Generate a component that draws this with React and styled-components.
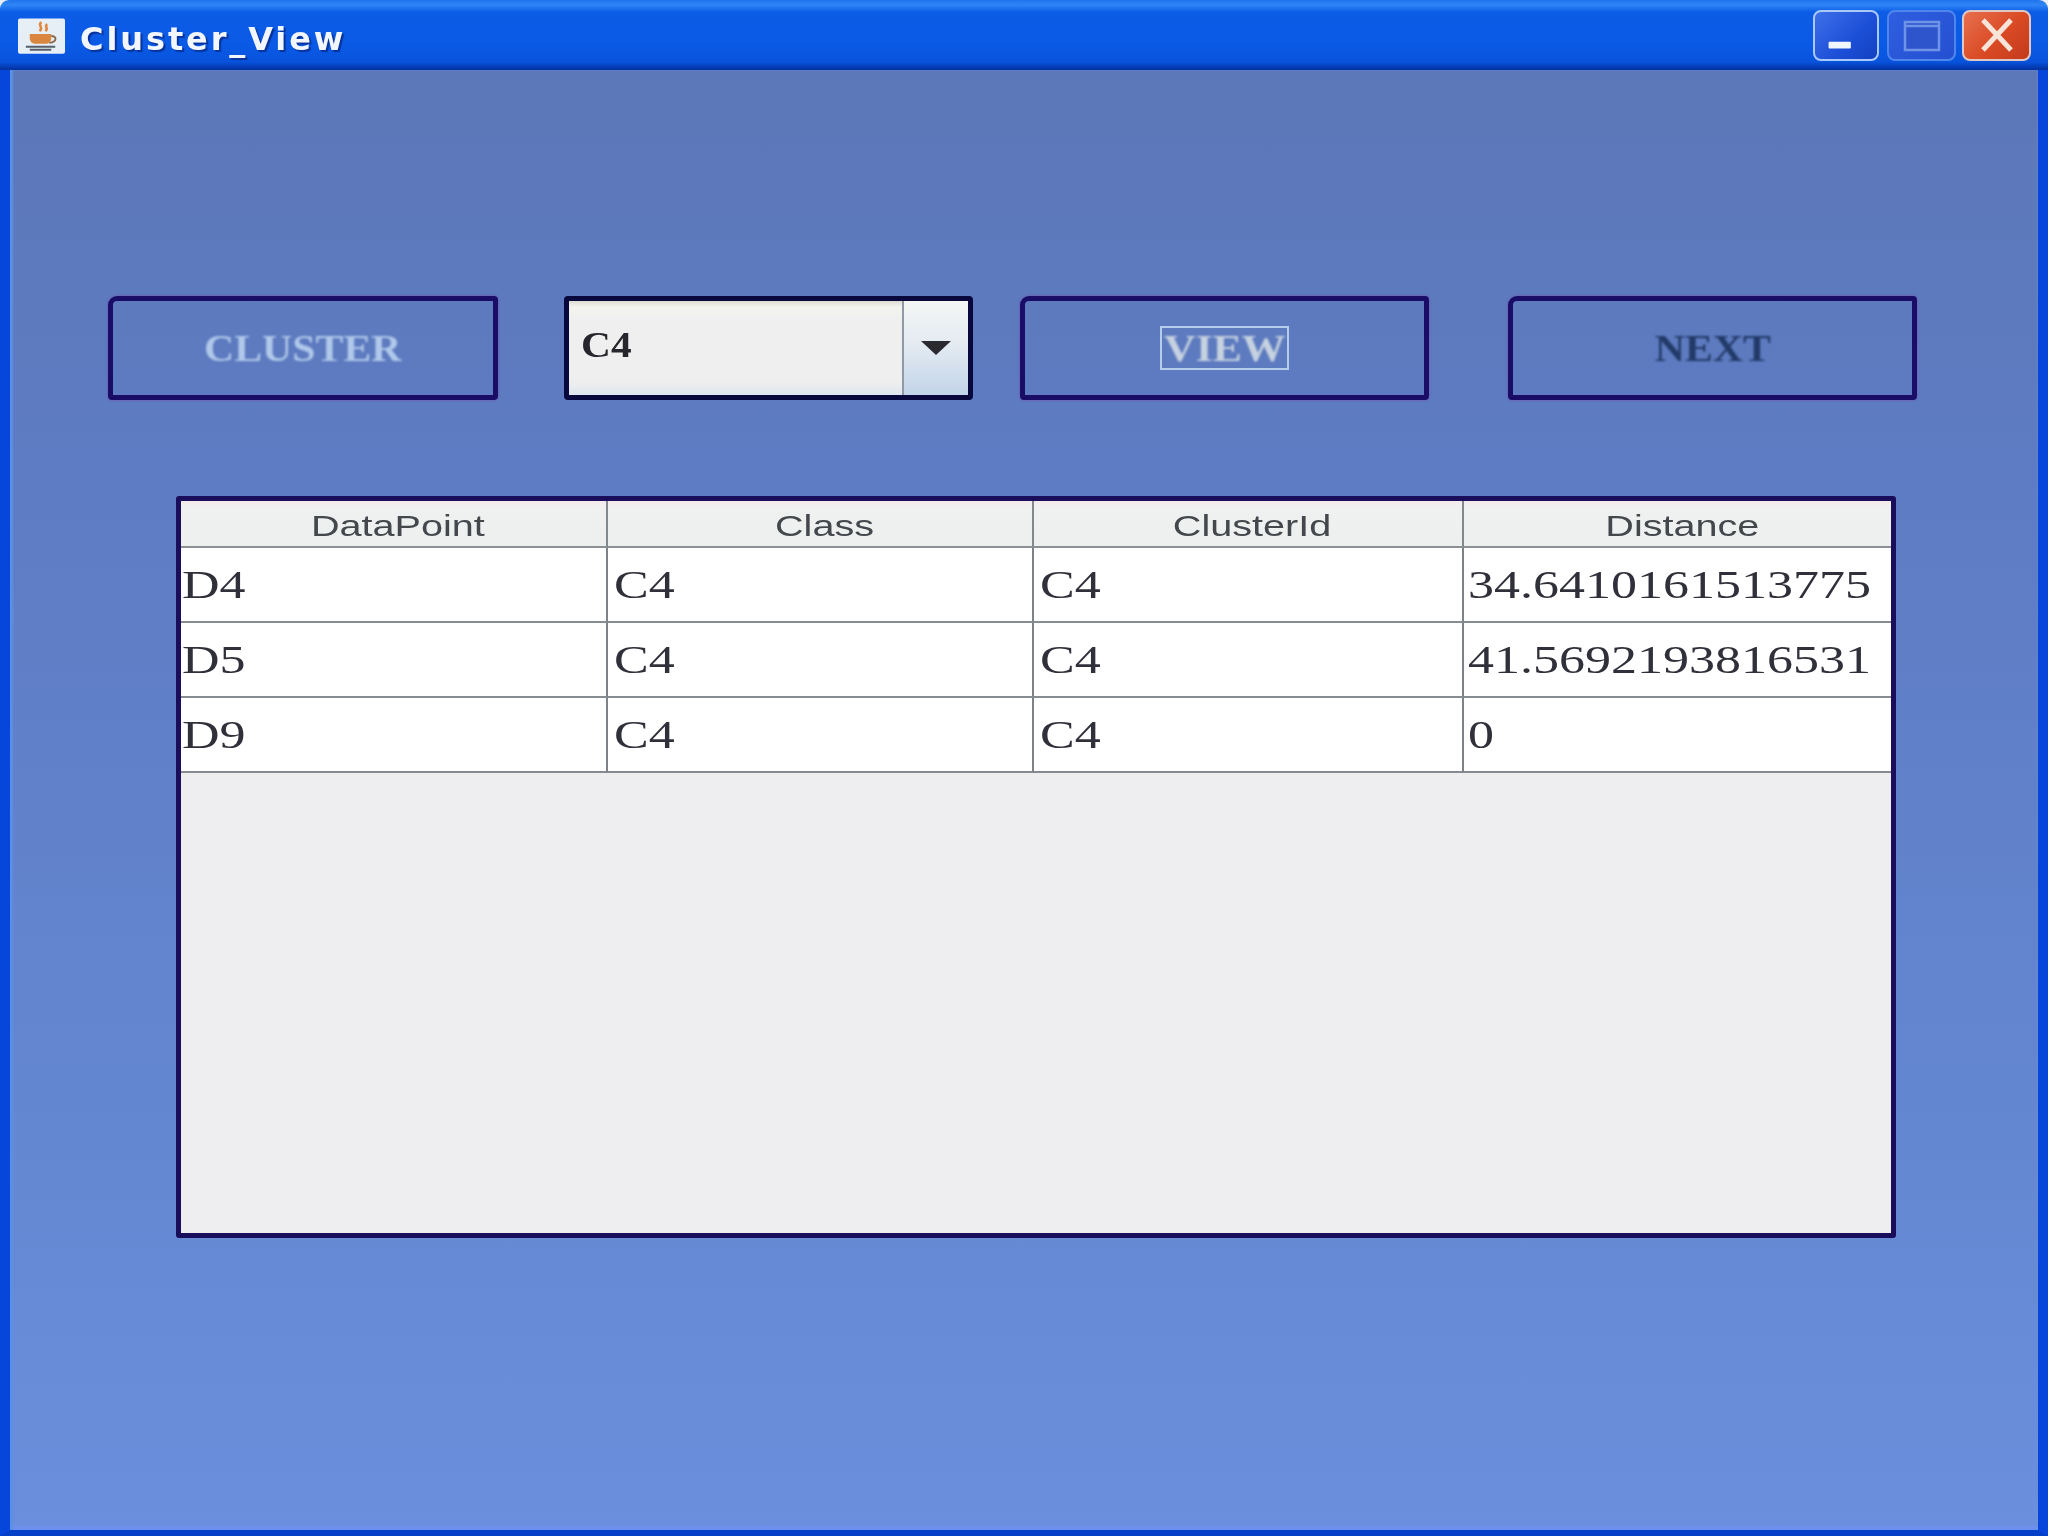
import React from "react";
import styled, { createGlobalStyle } from "styled-components";

const GlobalStyle = createGlobalStyle`
  html, body {
    margin: 0;
    padding: 0;
    background: #0a4fd8;
  }
`;

const Frame = styled.div`
  width: 2048px;
  height: 1536px;
  display: flex;
  flex-direction: column;
  overflow: hidden;
  background: linear-gradient(180deg, #e8eef8 0, #e8eef8 10px, #0a4bd6 10px);
`;

const TitleBar = styled.div`
  height: 70px;
  flex: none;
  display: flex;
  align-items: center;
  padding: 0 17px 0 18px;
  background: linear-gradient(180deg, #1f74ee 0, #2f86f6 5px, #0c5ce6 12px, #0a5ae6 45px, #0853dc 62px, #0438ac 68px, #04309c 70px);
  border-radius: 9px 9px 0 0;
`;

const AppIcon = styled.svg`
  width: 47px;
  height: 36px;
  flex: none;
  margin-top: 2px;
  filter: blur(0.6px);
`;

const Title = styled.div`
  margin: 7px 0 0 15px;
  flex: 1;
  font: bold 32px "DejaVu Sans", sans-serif;
  letter-spacing: 2.9px;
  color: #f2f7ff;
  text-shadow: 2px 2px 1px #07339a;
  filter: blur(0.7px);
`;

const WinButton = styled.div`
  width: ${(p) => p.$w}px;
  height: 51px;
  margin-left: ${(p) => p.$gap || 0}px;
  box-sizing: border-box;
  border: 2px solid ${(p) => p.$edge};
  border-radius: 8px;
  background: ${(p) => p.$bg};
  display: flex;
  align-items: center;
  justify-content: center;
  filter: blur(0.6px);
`;

const GlyphSvg = styled.svg`
  width: 64px;
  height: 46px;
`;

const Body = styled.div`
  flex: 1;
  display: flex;
  flex-direction: column;
  border-left: 10px solid #0646da;
  border-right: 10px solid #0646da;
  border-bottom: 6px solid #0540c8;
  padding-top: 226px;
  background: linear-gradient(180deg, #5c78b8 0%, #5e7cc4 30%, #6385cf 65%, #6b8fdc 100%);
  box-shadow: inset 3px 0 2px #5c90e6, inset 0 -4px 2px #6f90ee;
`;

const Toolbar = styled.div`
  display: flex;
  height: 104px;
  padding-left: 98px;
`;

const ActionButton = styled.button`
  width: ${(p) => p.$w}px;
  height: 104px;
  margin-right: ${(p) => p.$after || 0}px;
  box-sizing: border-box;
  padding: 0;
  border: 5px solid #1a0d68;
  border-radius: 9px 4px 4px 4px;
  background: transparent;
  box-shadow: 0 0 2px 1px rgba(120, 80, 170, 0.45);
  display: flex;
  align-items: center;
  justify-content: center;
`;

const ButtonText = styled.span`
  display: inline-block;
  font: bold 38px/40px "Liberation Serif", serif;
  color: ${(p) => p.$color};
  transform: scaleX(${(p) => p.$stretch || 1.1});
  filter: blur(0.8px);
`;

const FocusBox = styled.span`
  display: inline-flex;
  padding: 0 10px;
  outline: 2px solid #b4cdea;
`;

const Combo = styled.div`
  width: 409px;
  height: 104px;
  margin-right: 47px;
  box-sizing: border-box;
  border: 5px solid #08083c;
  border-radius: 4px;
  display: flex;
  background: #efefef;
`;

const ComboValue = styled.div`
  flex: 1;
  display: flex;
  align-items: center;
  padding: 0 0 6px 12px;
  border-right: 2px solid #8f9aa6;
  background: linear-gradient(180deg, #dcdcd4 0, #f4f4ee 6px, #efefef 20%, #efefef 85%, #dfe6ee 100%);
`;

const ComboText = styled.span`
  display: inline-block;
  font: bold 36px "Liberation Serif", serif;
  color: #26262c;
  transform: scaleX(1.15);
  transform-origin: left center;
  filter: blur(0.6px);
`;

const ComboArrow = styled.div`
  width: 64px;
  display: flex;
  align-items: center;
  justify-content: center;
  background: linear-gradient(180deg, #f4f6f4 0%, #e4ebf2 45%, #c2d4e8 100%);
`;

const ArrowSvg = styled.svg`
  width: 32px;
  height: 16px;
`;

const TablePanel = styled.div`
  width: 1720px;
  height: 742px;
  margin: 96px 0 0 166px;
  box-sizing: border-box;
  border: 5px solid #1a0d5c;
  border-radius: 3px;
  background: #eeedef;
  display: flex;
  flex-direction: column;
`;

const HeaderRow = styled.div`
  height: 47px;
  flex: none;
  display: grid;
  grid-template-columns: 427px 426px 430px 1fr;
  background: linear-gradient(180deg, #f6e9ec 0, #eff0f0 6px, #eef0f0 100%);
`;

const HeaderCell = styled.div`
  box-sizing: border-box;
  border-right: ${(p) => (p.$last ? "none" : "2px solid #82898e")};
  border-bottom: 2px solid #8b9195;
  display: flex;
  align-items: center;
  justify-content: center;
  padding: 4px 0 0 9px;
`;

const HeaderText = styled.span`
  display: inline-block;
  font: 30px "Liberation Sans", sans-serif;
  color: #44484c;
  transform: scaleX(1.32);
  filter: blur(0.6px);
`;

const DataRow = styled.div`
  height: 75px;
  flex: none;
  display: grid;
  grid-template-columns: 427px 426px 430px 1fr;
  background: #fff;
`;

const DataCell = styled.div`
  box-sizing: border-box;
  border-right: ${(p) => (p.$last ? "none" : "2px solid #7c8286")};
  border-bottom: 2px solid #868c90;
  display: flex;
  align-items: center;
  padding-left: ${(p) => p.$pad}px;
`;

const CellText = styled.span`
  display: inline-block;
  font: 40px "Liberation Serif", serif;
  color: #30303a;
  white-space: nowrap;
  transform: scaleX(1.3);
  transform-origin: left center;
  filter: blur(0.6px);
`;

const rows = [
  ["D4", "C4", "C4", "34.6410161513775"],
  ["D5", "C4", "C4", "41.5692193816531"],
  ["D9", "C4", "C4", "0"],
];

const columns = ["DataPoint", "Class", "ClusterId", "Distance"];
const cellPads = [1, 6, 6, 4];

const App = () => {
  return (
    <Frame>
      <GlobalStyle />
      <TitleBar>
        <AppIcon viewBox="0 0 48 36">
          <rect width="48" height="36" rx="2" fill="#e6eef6" />
          <path d="M24 4c-5 3 3 5-2 9M30 6c-4 2 2 4-2 7" stroke="#e2863a" strokeWidth="2.5" fill="none" />
          <path d="M12 16h22v4c0 4-3 6-6 6h-10c-3 0-6-2-6-6z" fill="#d9873e" />
          <path d="M34 18c6 0 6 6-2 7" stroke="#8a6a4a" strokeWidth="2" fill="none" />
          <path d="M8 29h30M12 32h22" stroke="#56606c" strokeWidth="2" />
        </AppIcon>
        <Title>Cluster_View</Title>
        <WinButton $w={66} $edge="#a9c9f8" $bg="linear-gradient(135deg, #3f6fe8, #1c4fd8 60%, #1340c0)">
          <GlyphSvg viewBox="0 0 64 46">
            <rect x="14" y="30" width="23" height="7" rx="1" fill="#f2f6ff" />
          </GlyphSvg>
        </WinButton>
        <WinButton $w={69} $gap={8} $edge="#4f86ee" $bg="linear-gradient(135deg, #2f5ee0, #2450d0)">
          <GlyphSvg viewBox="0 0 64 46">
            <path d="M15 10h34v28h-34zM15 14h34" stroke="#6f93e8" strokeWidth="2.5" fill="#2f55cc" />
          </GlyphSvg>
        </WinButton>
        <WinButton $w={69} $gap={6} $edge="#e0c8c4" $bg="linear-gradient(135deg, #e8704e, #d94a24 55%, #c23a1c)">
          <GlyphSvg viewBox="0 0 64 46">
            <path d="M18 8l28 30M46 8l-28 30" stroke="#f8e4d8" strokeWidth="5" />
          </GlyphSvg>
        </WinButton>
      </TitleBar>
      <Body>
        <Toolbar>
          <ActionButton $w={390} $after={66}>
            <ButtonText $color="#b0c8ea">CLUSTER</ButtonText>
          </ActionButton>
          <Combo>
            <ComboValue>
              <ComboText>C4</ComboText>
            </ComboValue>
            <ComboArrow>
              <ArrowSvg viewBox="0 0 32 16">
                <path d="M1 1h30l-15 14z" fill="#2a2a30" />
              </ArrowSvg>
            </ComboArrow>
          </Combo>
          <ActionButton $w={409} $after={79}>
            <FocusBox>
              <ButtonText $color="#c6d2e0" $stretch={1.15}>VIEW</ButtonText>
            </FocusBox>
          </ActionButton>
          <ActionButton $w={409}>
            <ButtonText $color="#223a68">NEXT</ButtonText>
          </ActionButton>
        </Toolbar>
        <TablePanel>
          <HeaderRow>
            {columns.map((name, i) => (
              <HeaderCell key={name} $last={i === columns.length - 1}>
                <HeaderText>{name}</HeaderText>
              </HeaderCell>
            ))}
          </HeaderRow>
          {rows.map((row) => (
            <DataRow key={row[0]}>
              {row.map((value, i) => (
                <DataCell key={i} $last={i === row.length - 1} $pad={cellPads[i]}>
                  <CellText>{value}</CellText>
                </DataCell>
              ))}
            </DataRow>
          ))}
        </TablePanel>
      </Body>
    </Frame>
  );
};

export default App;
